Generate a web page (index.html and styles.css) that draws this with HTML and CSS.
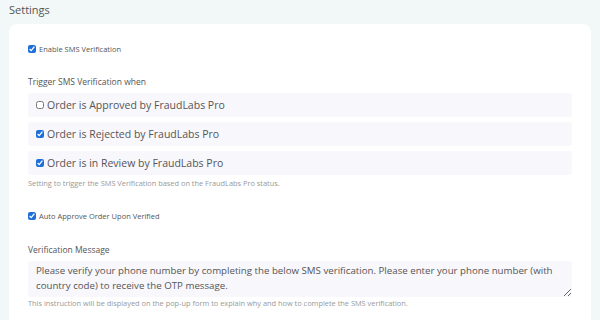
FILE: index.html
```html
<!DOCTYPE html>
<html lang="en">
<head>
  <meta charset="UTF-8">
  <meta name="viewport" content="width=device-width, initial-scale=1.0">
  <title>Settings</title>
  <link rel="stylesheet" href="styles.css">
</head>
<body>
  <h1>Settings</h1>

  <div class="card">
    <label class="check">
      <input type="checkbox" checked> Enable SMS Verification
    </label>

    <div class="field">
      <div class="field-label">Trigger SMS Verification when</div>
      <div class="options">
        <label class="option"><input type="checkbox"> Order is Approved by FraudLabs Pro</label>
        <label class="option"><input type="checkbox" checked> Order is Rejected by FraudLabs Pro</label>
        <label class="option"><input type="checkbox" checked> Order is in Review by FraudLabs Pro</label>
      </div>
      <p class="help">Setting to trigger the SMS Verification based on the FraudLabs Pro status.</p>
    </div>

    <label class="check">
      <input type="checkbox" checked> Auto Approve Order Upon Verified
    </label>

    <div class="field field-message">
      <div class="field-label">Verification Message</div>
      <textarea class="message">Please verify your phone number by completing the below SMS verification. Please enter your phone number (with country code) to receive the OTP message.</textarea>
      <p class="help help-tight">This instruction will be displayed on the pop-up form to explain why and how to complete the SMS verification.</p>
    </div>
  </div>
</body>
</html>
```

FILE: styles.css
```css
body {
  margin: 0;
  padding: 0 9px;
  height: 320px;
  overflow: hidden;
  background-color: #f2f8f7;
  font-family: "Open Sans", Arial, sans-serif;
  color: #555;
}
h1 {
  margin: 0;
  padding-top: 2px;
  height: 22px;
  font-size: 11px;
  font-weight: 400;
  color: #555;
}
.card {
  box-sizing: border-box;
  height: 296px;
  padding: 20px 19px 0 19px;
  background-color: #fff;
  border-radius: 8px 8px 0 0;
}
.check {
  display: flex;
  align-items: center;
  font-size: 7.5px;
  color: #555;
}
.check input,
.option input {
  width: 8px;
  height: 8px;
  margin: 0 3px 0 0;
  accent-color: #1e6fd9;
}
.field {
  margin-top: 22px;
  margin-bottom: 23px;
}
.field-message {
  margin-top: 23px;
}
.field-label {
  font-size: 8.5px;
  color: #555;
  margin-bottom: 6px;
}
.options {
  display: flex;
  flex-direction: column;
  gap: 5px;
}
.option {
  display: flex;
  align-items: center;
  height: 24px;
  padding: 0 8px;
  background-color: #f8f7fc;
  border-radius: 3px;
  font-size: 10.5px;
  color: #555;
}
.help {
  margin: 3px 0 0 0;
  font-size: 7.4px;
  color: #999;
}
.help-tight {
  margin-top: 1px;
}
.message {
  display: block;
  box-sizing: border-box;
  width: 100%;
  height: 36px;
  padding: 2px 8px;
  border: none;
  border-radius: 3px;
  background-color: #f8f7fc;
  font-family: "Open Sans", Arial, sans-serif;
  font-size: 9.7px;
  line-height: 15px;
  color: #555;
  resize: vertical;
}
```
